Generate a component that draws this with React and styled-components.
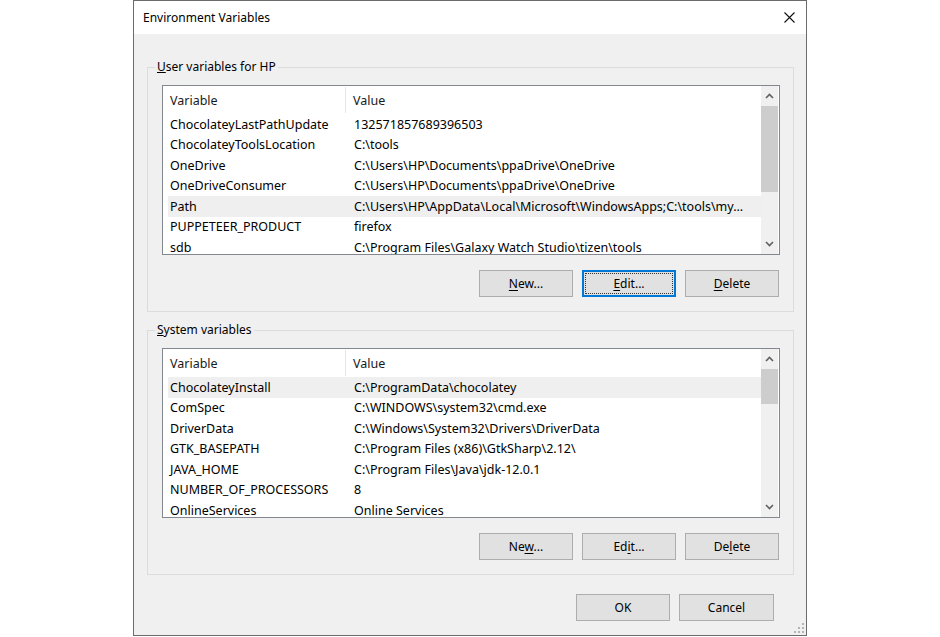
import React from "react"
import styled, { createGlobalStyle, css } from "styled-components"

const GlobalStyle = createGlobalStyle`
    body {
        margin: 0;
        background: #ffffff;
        font-family: "Noto Sans", "Open Sans", sans-serif;
        font-size: 12px;
        color: #000;
    }
    * {
        box-sizing: border-box;
    }
`

const Stage = styled.div`
    width: 940px;
    height: 637px;
    padding-left: 133px;
    background: #fff;
`

const Dialog = styled.div`
    position: relative;
    width: 674px;
    height: 636px;
    border: 1px solid #6b6b6b;
    display: flex;
    flex-direction: column;
    background: #f0f0f0;
`

const TitleBar = styled.div`
    height: 33px;
    flex: none;
    background: #fff;
    display: flex;
    align-items: center;
    justify-content: space-between;
    padding: 0 11px 0 9px;
    font-size: 12px;
`

const Body = styled.div`
    flex: 1;
    display: flex;
    flex-direction: column;
`

const Group = styled.fieldset`
    width: 647px;
    margin: ${(p) => p.$top}px 0 0 13px;
    padding: 10px 13px 14px 14px;
    border: 1px solid #dcdcdc;
    min-width: 0;
`

const Legend = styled.legend`
    margin-left: -7px;
    padding: 0 2px;
    line-height: 16px;
    font-size: 12px;
`

const ListView = styled.div`
    width: 618px;
    height: 170px;
    border: 1px solid #828790;
    background: #fff;
    display: flex;
    font-size: 12.5px;
`

const ListContent = styled.div`
    flex: 1;
    overflow: hidden;
`

const Header = styled.div`
    height: 28px;
    display: flex;
    padding-top: 1px;
`

const HeaderCell = styled.div`
    width: ${(p) => p.$width || "auto"};
    flex: ${(p) => (p.$width ? "none" : 1)};
    display: flex;
    align-items: center;
    padding-left: 7px;
    border-right: ${(p) => (p.$width ? "1px solid #e5e5e5" : "none")};
    color: #1a1a1a;
    margin-bottom: 1px;
`

const Row = styled.div`
    height: 20.5px;
    margin-left: 5px;
    display: flex;
    align-items: center;
    white-space: nowrap;
    background: ${(p) => (p.$selected ? "#efefef" : "transparent")};
`

const NameCell = styled.div`
    width: 178px;
    flex: none;
    padding-left: 2px;
`

const ValueCell = styled.div`
    flex: 1;
    padding-left: 8px;
    overflow: hidden;
`

const ScrollBar = styled.div`
    width: 17px;
    flex: none;
    margin-right: 1px;
    background: #f0f0f0;
    display: flex;
    flex-direction: column;
`

const ScrollArrow = styled.div`
    height: 20px;
    flex: none;
    display: flex;
    align-items: center;
    justify-content: center;
`

const ScrollTrack = styled.div`
    flex: 1;
`

const Thumb = styled.div`
    height: ${(p) => p.$height}px;
    background: #cdcdcd;
`

const ButtonRow = styled.div`
    display: flex;
    justify-content: flex-end;
    gap: 9px;
    margin-top: ${(p) => p.$top}px;
    padding-right: ${(p) => p.$right}px;
`

const Button = styled.div`
    position: relative;
    width: ${(p) => p.$width || 94}px;
    height: 27px;
    display: flex;
    align-items: center;
    justify-content: center;
    background: #e1e1e1;
    border: 1px solid #adadad;
    font-size: 12px;

    u {
        text-decoration-thickness: 1px;
        text-underline-offset: 2px;
    }

    ${(p) =>
        p.$focused &&
        css`
            border-color: #0078d7;
            box-shadow: inset 0 0 0 1px #0078d7;

            &::after {
                content: "";
                position: absolute;
                inset: 2px;
                border: 1px dotted #333;
            }
        `}
`

const Grip = styled.svg`
    position: absolute;
    right: 2px;
    bottom: 2px;
`

const userVars = [
    ["ChocolateyLastPathUpdate", "132571857689396503"],
    ["ChocolateyToolsLocation", "C:\\tools"],
    ["OneDrive", "C:\\Users\\HP\\Documents\\ppaDrive\\OneDrive"],
    ["OneDriveConsumer", "C:\\Users\\HP\\Documents\\ppaDrive\\OneDrive"],
    ["Path", "C:\\Users\\HP\\AppData\\Local\\Microsoft\\WindowsApps;C:\\tools\\my...", true],
    ["PUPPETEER_PRODUCT", "firefox"],
    ["sdb", "C:\\Program Files\\Galaxy Watch Studio\\tizen\\tools"],
]

const systemVars = [
    ["ChocolateyInstall", "C:\\ProgramData\\chocolatey", true],
    ["ComSpec", "C:\\WINDOWS\\system32\\cmd.exe"],
    ["DriverData", "C:\\Windows\\System32\\Drivers\\DriverData"],
    ["GTK_BASEPATH", "C:\\Program Files (x86)\\GtkSharp\\2.12\\"],
    ["JAVA_HOME", "C:\\Program Files\\Java\\jdk-12.0.1"],
    ["NUMBER_OF_PROCESSORS", "8"],
    ["OnlineServices", "Online Services"],
]

const Chevron = ({ up }) => (
    <svg width="9" height="6" viewBox="0 0 9 6">
        <path
            d={up ? "M1 5 L4.5 1.5 L8 5" : "M1 1 L4.5 4.5 L8 1"}
            fill="none"
            stroke="#606060"
            strokeWidth="1.6"
        />
    </svg>
)

const VariableList = ({ items, thumb }) => (
    <ListView>
        <ListContent>
            <Header>
                <HeaderCell $width="183px">Variable</HeaderCell>
                <HeaderCell>Value</HeaderCell>
            </Header>
            {items.map(([name, value, selected]) => (
                <Row key={name} $selected={selected}>
                    <NameCell>{name}</NameCell>
                    <ValueCell>{value}</ValueCell>
                </Row>
            ))}
        </ListContent>
        <ScrollBar>
            <ScrollArrow>
                <Chevron up />
            </ScrollArrow>
            <ScrollTrack>
                <Thumb $height={thumb} />
            </ScrollTrack>
            <ScrollArrow>
                <Chevron />
            </ScrollArrow>
        </ScrollBar>
    </ListView>
)

const App = () => {
    return (
        <Stage>
            <GlobalStyle />
            <Dialog>
                <TitleBar>
                    <span>Environment Variables</span>
                    <svg width="11" height="11" viewBox="0 0 11 11">
                        <path d="M0.5 0.5 L10.5 10.5 M10.5 0.5 L0.5 10.5" stroke="#111" strokeWidth="1.1" />
                    </svg>
                </TitleBar>
                <Body>
                    <Group $top={25}>
                        <Legend>
                            <u>U</u>ser variables for HP
                        </Legend>
                        <VariableList items={userVars} thumb={86} />
                        <ButtonRow $top={15} $right={1}>
                            <Button>
                                <span><u>N</u>ew...</span>
                            </Button>
                            <Button $focused>
                                <span><u>E</u>dit...</span>
                            </Button>
                            <Button>
                                <span><u>D</u>elete</span>
                            </Button>
                        </ButtonRow>
                    </Group>
                    <Group $top={10}>
                        <Legend>
                            <u>S</u>ystem variables
                        </Legend>
                        <VariableList items={systemVars} thumb={35} />
                        <ButtonRow $top={15} $right={1}>
                            <Button>
                                <span>Ne<u>w</u>...</span>
                            </Button>
                            <Button>
                                <span>Ed<u>i</u>t...</span>
                            </Button>
                            <Button>
                                <span>De<u>l</u>ete</span>
                            </Button>
                        </ButtonRow>
                    </Group>
                    <ButtonRow $top={19} $right={32}>
                        <Button>OK</Button>
                        <Button $width={95}>Cancel</Button>
                    </ButtonRow>
                </Body>
                <Grip width="10" height="10" viewBox="0 0 10 10">
                    <rect x="8" y="0" width="2" height="2" fill="#b4b4b4" />
                    <rect x="4" y="4" width="2" height="2" fill="#b4b4b4" />
                    <rect x="8" y="4" width="2" height="2" fill="#b4b4b4" />
                    <rect x="0" y="8" width="2" height="2" fill="#b4b4b4" />
                    <rect x="4" y="8" width="2" height="2" fill="#b4b4b4" />
                    <rect x="8" y="8" width="2" height="2" fill="#b4b4b4" />
                </Grip>
            </Dialog>
        </Stage>
    )
}

export default App
